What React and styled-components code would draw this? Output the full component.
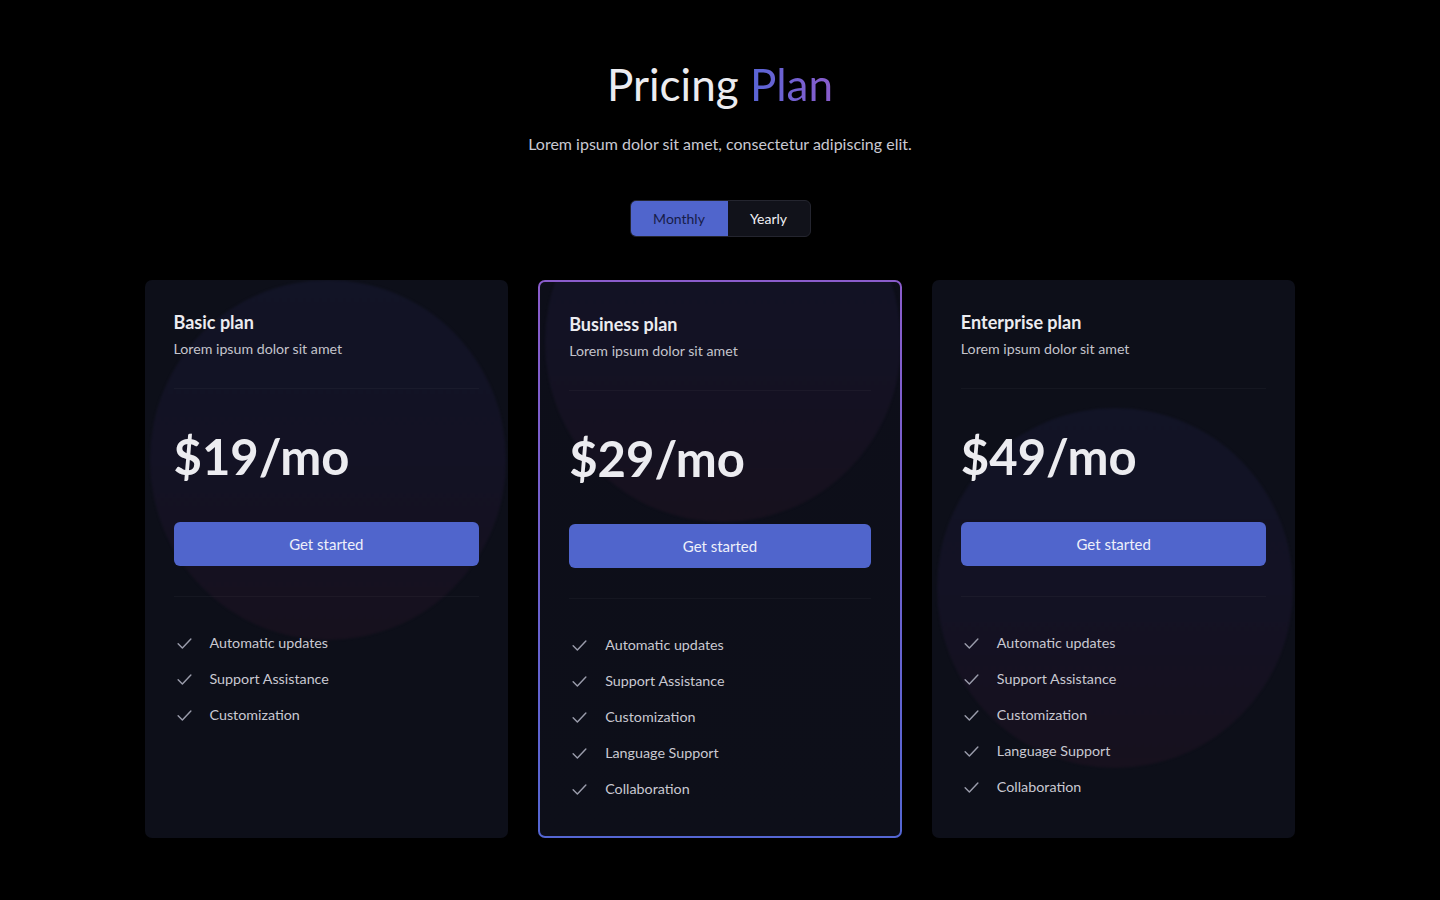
import React, { useState } from 'react'
import styled, { createGlobalStyle } from 'styled-components'

const GlobalStyle = createGlobalStyle`
  * { box-sizing: border-box; }
  body {
    margin: 0;
    background: #000;
    font-family: Lato, "Open Sans", sans-serif;
    color: #e8e8ee;
  }
`

const plans = [
  {
    name: 'Basic plan',
    price: '$19/mo',
    features: ['Automatic updates', 'Support Assistance', 'Customization'],
    glow: { left: 5, top: 0 },
  },
  {
    name: 'Business plan',
    price: '$29/mo',
    featured: true,
    features: ['Automatic updates', 'Support Assistance', 'Customization', 'Language Support', 'Collaboration'],
    glow: { left: 5, top: -120 },
  },
  {
    name: 'Enterprise plan',
    price: '$49/mo',
    features: ['Automatic updates', 'Support Assistance', 'Customization', 'Language Support', 'Collaboration'],
    glow: { left: 5, top: 128 },
  },
]

const Check = () => (
  <svg width="17" height="17" viewBox="0 0 24 24" fill="none" stroke="#9a9cab" strokeWidth="2" strokeLinecap="round" strokeLinejoin="round">
    <path d="M3 12.5l6 6L21 5.5" />
  </svg>
)

const App = () => {
  const [period, setPeriod] = useState('monthly')
  return (
    <Page>
      <GlobalStyle />
      <Header>
        <Title>Pricing <span>Plan</span></Title>
        <Subtitle>Lorem ipsum dolor sit amet, consectetur adipiscing elit.</Subtitle>
        <Toggle>
          <ToggleButton $active={period === 'monthly'} onClick={() => setPeriod('monthly')}>Monthly</ToggleButton>
          <ToggleButton $active={period === 'yearly'} onClick={() => setPeriod('yearly')}>Yearly</ToggleButton>
        </Toggle>
      </Header>
      <Cards>
        {plans.map(plan => (
          <Card key={plan.name} $featured={plan.featured}>
            <Glow style={{ left: plan.glow.left, top: plan.glow.top }} />
            <CardInner>
              <PlanName>{plan.name}</PlanName>
              <PlanDesc>Lorem ipsum dolor sit amet</PlanDesc>
              <Divider />
              <Price>{plan.price}</Price>
              <CtaButton>Get started</CtaButton>
              <Divider $gap={30} />
              <Features>
                {plan.features.map(f => (
                  <Feature key={f}>
                    <Check />
                    {f}
                  </Feature>
                ))}
              </Features>
            </CardInner>
          </Card>
        ))}
      </Cards>
    </Page>
  )
}

export default App

const Page = styled.div`
  width: 1440px;
  height: 900px;
  background: #000;
  padding-top: 56px;
`
const Header = styled.div`
  display: flex;
  flex-direction: column;
  align-items: center;
`
const Title = styled.h1`
  margin: 0;
  font-size: 44px;
  font-weight: 400;
  line-height: 56px;
  color: #ececf0;
  span {
    background: linear-gradient(90deg, #5865d6, #8a5ccb);
    -webkit-background-clip: text;
    background-clip: text;
    color: transparent;
  }
`
const Subtitle = styled.p`
  margin: 21px 0 0;
  font-size: 16px;
  line-height: 22px;
  color: #c9c9d2;
`
const Toggle = styled.div`
  margin-top: 45px;
  display: flex;
  height: 37px;
  border: 1px solid #24252f;
  border-radius: 6px;
  background: #11121a;
  overflow: hidden;
`
const ToggleButton = styled.button`
  border: none;
  cursor: pointer;
  font-family: inherit;
  font-size: 14px;
  padding: 0 22px;
  background: ${p => (p.$active ? '#5065cc' : 'transparent')};
  color: ${p => (p.$active ? '#171c48' : '#f0f0f4')};
  &:first-child { width: 97px; }
  &:last-child { width: 82px; }
`
const Cards = styled.div`
  margin: 43px auto 0;
  width: 1151px;
  display: grid;
  grid-template-columns: repeat(3, 1fr);
  gap: 30px;
`
const Card = styled.div`
  position: relative;
  overflow: hidden;
  height: 558px;
  border-radius: 7px;
  border: ${p => (p.$featured ? '2px solid transparent' : '0')};
  background: ${p =>
    p.$featured
      ? 'linear-gradient(#0d0e19, #0d0f19) padding-box, linear-gradient(180deg, #8a5ccb, #5466d3) border-box'
      : '#0d0f19'};
`
const Glow = styled.div`
  position: absolute;
  width: 356px;
  height: 360px;
  border-radius: 50%;
  background: linear-gradient(180deg, #121426 0%, #131224 50%, #17111e 100%);
  filter: blur(1px);
  pointer-events: none;
`
const CardInner = styled.div`
  position: relative;
  padding: 31px 29px 0;
`
const PlanName = styled.h3`
  margin: 0;
  font-size: 18px;
  font-weight: 700;
  line-height: 22px;
  color: #ececf0;
`
const PlanDesc = styled.p`
  margin: 6px 0 0;
  font-size: 14.2px;
  line-height: 20px;
  color: #c4c4cc;
`
const Divider = styled.div`
  height: 1px;
  background: rgba(255, 255, 255, 0.035);
  margin-top: ${p => p.$gap || 29}px;
`
const Price = styled.div`
  margin-top: 37px;
  font-size: 49px;
  font-weight: 700;
  line-height: 60px;
  color: #ececf0;
`
const CtaButton = styled.button`
  margin-top: 36px;
  width: 100%;
  height: 44px;
  border: none;
  border-radius: 6px;
  background: #5065cc;
  color: #eef0fa;
  font-family: inherit;
  font-size: 15px;
  cursor: pointer;
`
const Features = styled.ul`
  list-style: none;
  margin: 36px 0 0;
  padding: 0;
  display: flex;
  flex-direction: column;
  gap: 16px;
`
const Feature = styled.li`
  display: flex;
  align-items: center;
  gap: 17px;
  padding-left: 2px;
  font-size: 14.3px;
  line-height: 20px;
  color: #c9c9d2;
`
